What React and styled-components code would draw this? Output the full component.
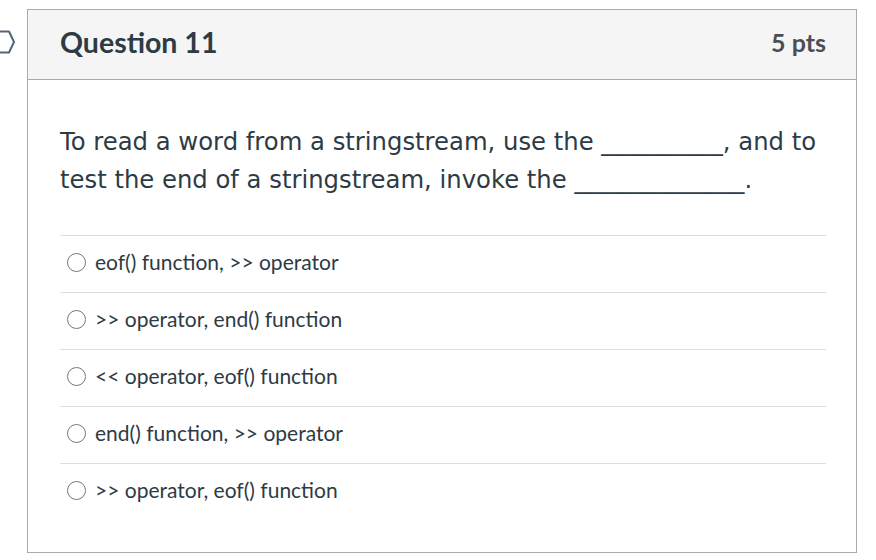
import styled, { createGlobalStyle } from 'styled-components';

const GlobalStyle = createGlobalStyle`
  html, body {
    margin: 0;
    padding: 0;
    background: #fff;
  }
  body {
    font-family: Lato, "Liberation Sans", sans-serif;
    color: #2d3b45;
  }
`;

const Page = styled.div`
  display: flex;
  align-items: flex-start;
  padding-top: 9px;
`;

const FlagColumn = styled.div`
  width: 27px;
  flex: none;
  padding-top: 21px;
  display: flex;
`;

const Card = styled.div`
  width: 828px;
  border: 1px solid #aaaaaa;
  background: #fff;
`;

const Header = styled.div`
  height: 63px;
  display: flex;
  align-items: center;
  justify-content: space-between;
  padding: 0 30px 6px 32px;
  background: #f5f5f5;
  border-bottom: 1px solid #aaaaaa;
`;

const Title = styled.h2`
  margin: 0;
  font-family: Lato, "Liberation Sans", sans-serif;
  font-weight: 700;
  font-size: 28.5px;
  color: #2d3b45;
`;

const Points = styled.div`
  font-family: Lato, "Liberation Sans", sans-serif;
  font-weight: 700;
  font-size: 25px;
  color: #4a4f55;
`;

const Body = styled.div`
  padding: 43px 30px 32px 32px;
`;

const Prompt = styled.p`
  margin: 0 0 36px;
  font-family: "DejaVu Sans", Verdana, sans-serif;
  font-size: 24.3px;
  line-height: 38px;
  color: #2d3b45;
`;

const Answers = styled.div`
  display: flex;
  flex-direction: column;
`;

const Answer = styled.label`
  height: 50px;
  display: flex;
  align-items: center;
  gap: 9px;
  padding: 0 0 6px 7px;
  border-top: 1px solid #dddddd;
  font-family: Lato, "Liberation Sans", sans-serif;
  font-size: 21px;
  color: #2d3b45;
`;

const Radio = styled.span`
  width: 17px;
  height: 17px;
  border: 1.5px solid #777;
  border-radius: 50%;
  flex: none;
  margin-top: 3px;
`;

const options = [
  'eof() function, >> operator',
  '>> operator, end() function',
  '<< operator, eof() function',
  'end() function, >> operator',
  '>> operator, eof() function',
];

const Flag = () => (
  <svg width="16" height="24" viewBox="0 0 16 24">
    <path
      d="M-4 1.5 H9 L14 12 L9 22.5 H-4"
      fill="none"
      stroke="#52667a"
      strokeWidth="2"
      strokeLinejoin="round"
    />
  </svg>
);

export default function App() {
  return (
    <>
      <GlobalStyle />
      <Page>
        <FlagColumn>
          <Flag />
        </FlagColumn>
        <Card>
          <Header>
            <Title>Question 11</Title>
            <Points>5 pts</Points>
          </Header>
          <Body>
            <Prompt>
              To read a word from a stringstream, use the __________, and to
              test the end of a stringstream, invoke the ______________.
            </Prompt>
            <Answers>
              {options.map((o) => (
                <Answer key={o}>
                  <Radio />
                  {o}
                </Answer>
              ))}
            </Answers>
          </Body>
        </Card>
      </Page>
    </>
  );
}
